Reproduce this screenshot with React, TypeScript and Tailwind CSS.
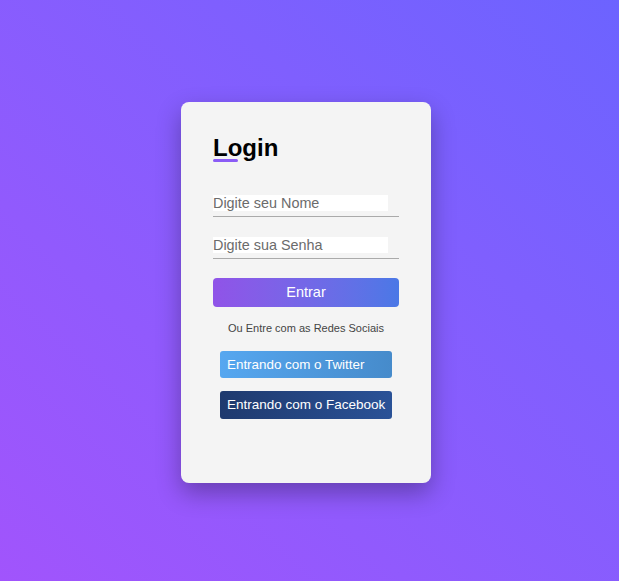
import React from 'react';

const Field: React.FC<{ placeholder: string; type?: string }> = ({ placeholder, type = 'text' }) => (
    <div className="w-[186px] border-b border-[#aaaaaa] pb-[5px]">
        <input
            type={type}
            placeholder={placeholder}
            className="block w-[175px] h-[16px] bg-white text-[14.4px] leading-[16px] text-[#333] placeholder:text-[#6b6b6b] outline-none"
        />
    </div>
);

const App: React.FC = () => {
    return (
        <div
            className="h-[581px] w-full flex items-center justify-center pr-[7px] pt-[4px] bg-linear-to-tr from-[#a154fc] to-[#6c63ff]"
            style={{ fontFamily: '"Liberation Sans", Arial, sans-serif' }}
        >
            <div className="w-[250px] h-[381px] rounded-lg bg-[#f4f4f4] shadow-[0_10px_25px_rgba(0,0,0,0.3)] pt-[32px] px-[32px]">
                <h1 className="relative h-[28px] text-[24px] leading-[28px] font-bold text-black">
                    Login
                    <span className="absolute left-0 bottom-0 w-[25px] h-[3px] rounded-full bg-[#8b5cf6]" />
                </h1>

                <div className="mt-[33px]">
                    <Field placeholder="Digite seu Nome" />
                </div>
                <div className="mt-[20px]">
                    <Field placeholder="Digite sua Senha" type="password" />
                </div>

                <button className="mt-[19px] w-[186px] h-[29px] rounded-[4px] bg-linear-to-r from-[#9053e8] to-[#4a78e6] text-white text-[14.5px] leading-[29px]">
                    Entrar
                </button>

                <p className="mt-[15px] w-[186px] text-center text-[11px] leading-[13px] text-[#444]">
                    Ou Entre com as Redes Sociais
                </p>

                <div className="mt-[16px] w-[186px] flex flex-col items-center gap-[13px]">
                    <button className="w-[172px] h-[27px] rounded-[3px] bg-linear-to-r from-[#56a7f0] to-[#468bcb] text-white text-[13.4px] leading-[27px] text-left pl-[7px]">
                        Entrando com o Twitter
                    </button>
                    <button className="w-[172px] h-[28px] rounded-[3px] bg-linear-to-r from-[#1f3a6e] to-[#2a5297] text-white text-[13.5px] leading-[28px] text-left pl-[7px] whitespace-nowrap">
                        Entrando com o Facebook
                    </button>
                </div>
            </div>
        </div>
    );
};

export default App;
